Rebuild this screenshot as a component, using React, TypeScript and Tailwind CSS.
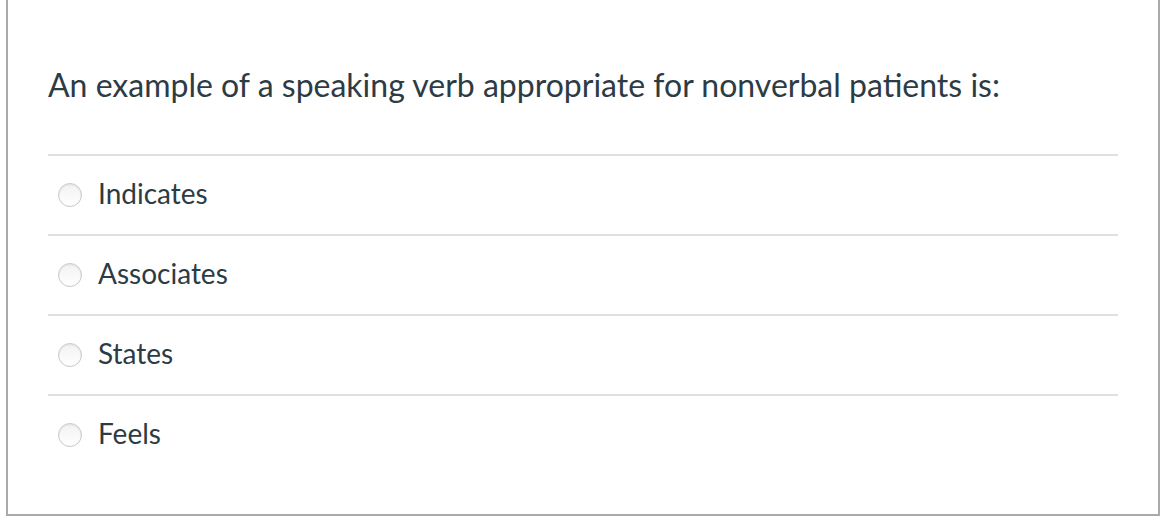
import React from 'react';

const options = ['Indicates', 'Associates', 'States', 'Feels'];

export default function App() {
  return (
    <div className="w-[1164px] h-[524px] bg-white" style={{ fontFamily: 'Lato, "Open Sans", sans-serif' }}>
      <div className="ml-[6px] w-[1154px] h-[516px] border-x-2 border-b-2 border-[#aaaaaa] px-[40px] pt-[64px] text-[#2d3b45]">
        <h2 className="text-[32px] leading-[42px] font-normal">
          An example of a speaking verb appropriate for nonverbal patients is:
        </h2>
        <div className="mt-[48px]">
          {options.map((opt) => (
            <label key={opt} className="flex h-[80px] items-center border-t-2 border-[#e0e0e0]">
              <span className="ml-[10px] mr-[16px] h-[24px] w-[24px] rounded-full border border-[#c8c8c8] bg-gradient-to-b from-[#f2f2f2] to-white shadow-[inset_0_1px_2px_rgba(0,0,0,0.08)]" />
              <span className="text-[28px] leading-[30px] -mt-[4px]">{opt}</span>
            </label>
          ))}
        </div>
      </div>
    </div>
  );
}
